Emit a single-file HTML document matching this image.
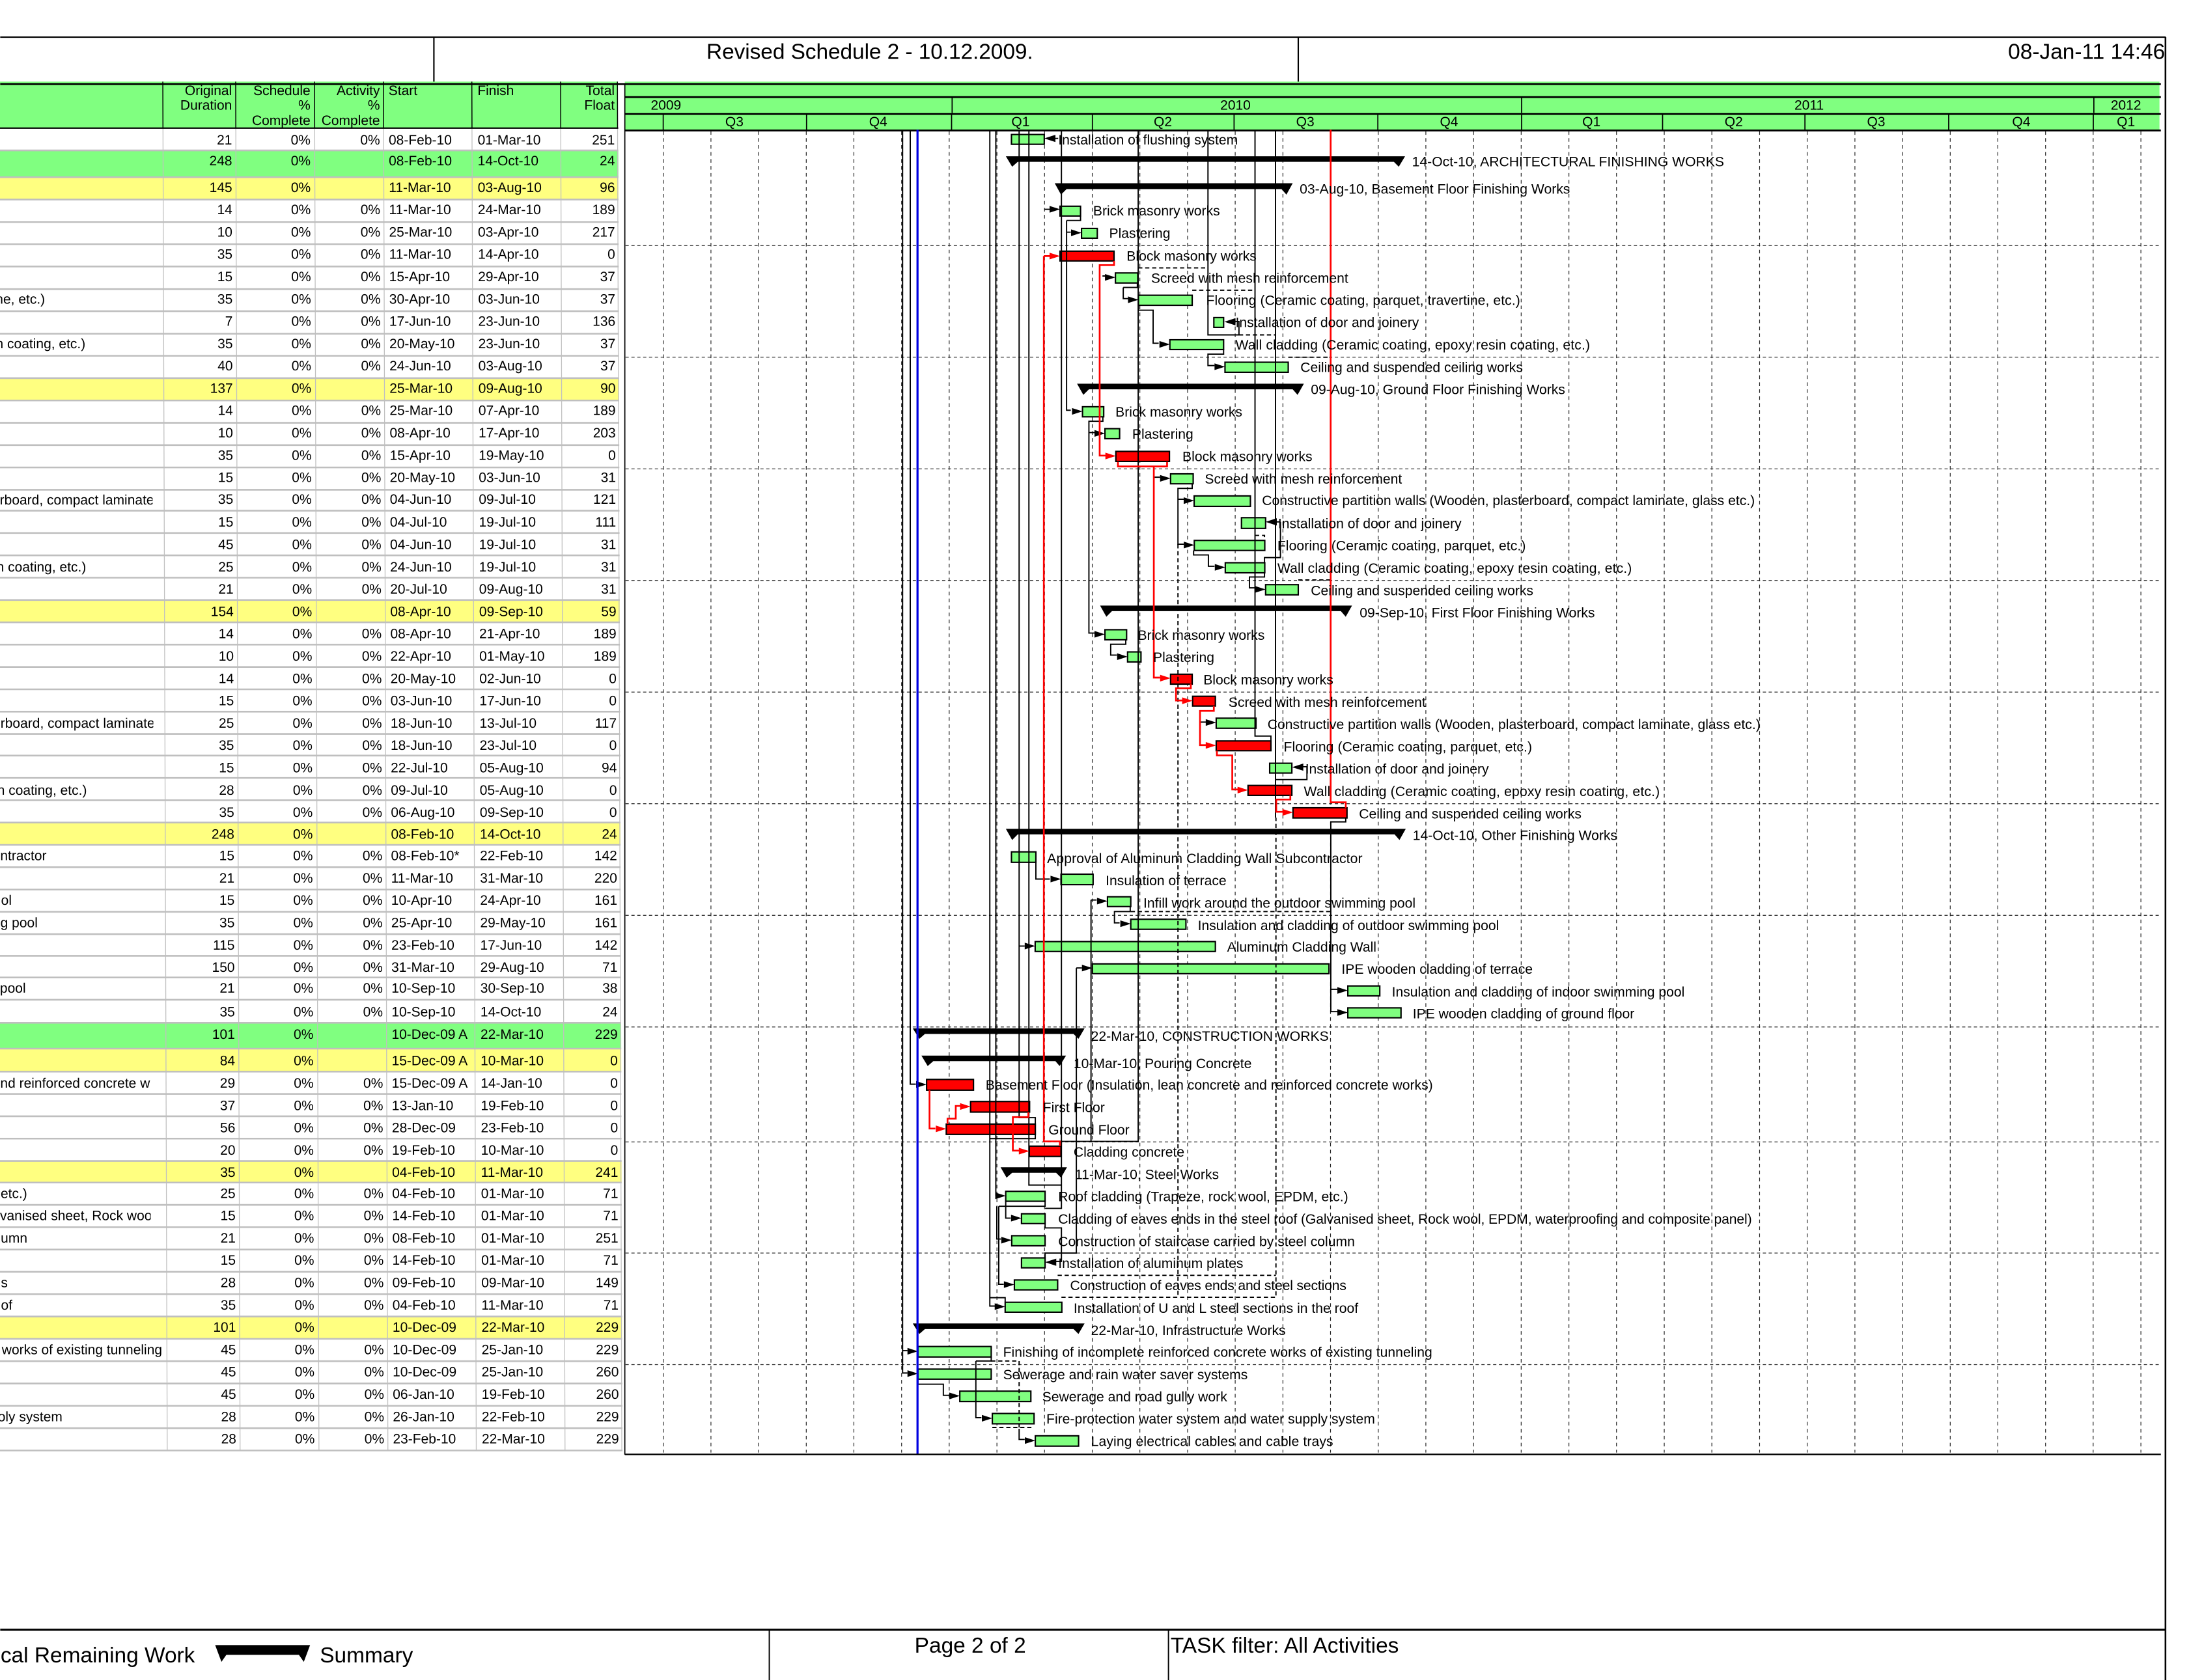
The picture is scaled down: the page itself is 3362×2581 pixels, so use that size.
<!DOCTYPE html>
<html><head><meta charset="utf-8"><title>Revised Schedule 2</title>
<style>
html,body{margin:0;padding:0;background:#fff;width:3362px;height:2581px;overflow:hidden}
svg{display:block}
text{font-family:"Liberation Sans",Arial,sans-serif;font-size:9.8px;fill:#000}
.l text{font-size:9.86px}
.e{text-anchor:end}.m{text-anchor:middle}
.b{font-size:15.6px}
.g{fill:#80ff80;stroke:#000;stroke-width:1}
.r{fill:#f00;stroke:#000;stroke-width:1}
.k{fill:none;stroke:#000;stroke-width:.9}
.d{fill:none;stroke:#000;stroke-width:.9;stroke-dasharray:3 2}
.q{fill:none;stroke:#f00;stroke-width:1.25}
</style></head><body>
<svg xmlns="http://www.w3.org/2000/svg" width="3362" height="2581" viewBox="0 0 1568 1204">
<defs><clipPath id="nc"><rect x="-5" y="90" width="113" height="960"/></clipPath><clipPath id="nd"><rect x="-5" y="90" width="110" height="960"/></clipPath></defs>
<rect width="1568" height="1204" fill="#fff"/>

<!-- page frame -->
<path d="M0 26.6H1551.5M310.7 26.6V60M930 26.6V60" fill="none" stroke="#000" stroke-width="1"/>
<path d="M1551.3 26.6V1204" fill="none" stroke="#000" stroke-width="1.2"/>
<path d="M0 1168H1551" fill="none" stroke="#000" stroke-width="1.5"/>
<path d="M551 1168V1204M837 1168V1204" fill="none" stroke="#000" stroke-width=".9"/>
<text class="b" x="506" y="42.3" textLength="234">Revised Schedule 2 - 10.12.2009.</text>
<text class="b e" x="1551" y="42.3">08-Jan-11 14:46</text>
<text class="b m" x="695" y="1184.3">Page 2 of 2</text>
<text class="b" x="838.5" y="1184.3">TASK filter: All Activities</text>
<text class="b e" x="139.5" y="1191.3">ical Remaining Work</text>
<text class="b" x="229" y="1191.3">Summary</text>
<path d="M154 1179H222L217.5 1191L214 1186H162L158.5 1191Z" fill="#000"/>

<!-- table -->
<g transform="skewX(.185)">
<rect x="-5" y="58.5" width="447" height="33.5" fill="#80ff80"/>
<rect x="-5" y="107.8" width="447.5" height="19.2" fill="#80ff80"/>
<rect x="-5" y="733" width="447.5" height="18.5" fill="#80ff80"/>
<g fill="#ffff80"><rect x="-5" y="127" width="447.5" height="16"/><rect x="-5" y="271" width="447.5" height="16"/><rect x="-5" y="430" width="447.5" height="16"/><rect x="-5" y="589.5" width="447.5" height="16"/><rect x="-5" y="751.5" width="447.5" height="16.5"/><rect x="-5" y="832" width="447.5" height="15.5"/><rect x="-5" y="943.5" width="447.5" height="16"/></g>
<path fill="none" stroke="#c0c0c0" stroke-width=".6" d="M116.3 92V1040M168.5 92V1040M225 92V1040M274.4 92V1040M337.7 92V1040M401.3 92V1040M442 92V1040"/>
<path fill="none" stroke="#bfbfbf" stroke-width="1.2" d="M-5 107.8H442.5M-5 127H442.5M-5 143H442.5M-5 159.2H442.5M-5 175H442.5M-5 191H442.5M-5 207.2H442.5M-5 223H442.5M-5 239.2H442.5M-5 255H442.5M-5 271H442.5M-5 287H442.5M-5 303H442.5M-5 319H442.5M-5 335H442.5M-5 351H442.5M-5 366H442.5M-5 382H442.5M-5 398H442.5M-5 414H442.5M-5 430H442.5M-5 446H442.5M-5 462H442.5M-5 478H442.5M-5 494H442.5M-5 510H442.5M-5 526H442.5M-5 541.5H442.5M-5 557.5H442.5M-5 573.5H442.5M-5 589.5H442.5M-5 605.5H442.5M-5 621.5H442.5M-5 637.5H442.5M-5 653.5H442.5M-5 669.5H442.5M-5 685H442.5M-5 700.5H442.5M-5 716.5H442.5M-5 733H442.5M-5 751.5H442.5M-5 768H442.5M-5 784H442.5M-5 800H442.5M-5 816H442.5M-5 832H442.5M-5 847.5H442.5M-5 863.5H442.5M-5 879.5H442.5M-5 895.5H442.5M-5 911.5H442.5M-5 927.5H442.5M-5 943.5H442.5M-5 959.5H442.5M-5 975.5H442.5M-5 991.5H442.5M-5 1007.5H442.5M-5 1023.5H442.5M-5 1039.5H442.5"/>
<path fill="none" stroke="#000" stroke-width=".7" d="M116.3 58.5V92M168.5 58.5V92M225 58.5V92M274.4 58.5V92M337.7 58.5V92M401.3 58.5V92M442 58.5V92"/>
<path fill="none" stroke="#000" stroke-width="1" d="M-5 91.8H442.5"/>
<g transform="translate(0,3.5)">
<text class=e x=165.8 y=64.5>Original</text><text class=e x=165.8 y=75>Duration</text>
<text class=e x=222 y=64.5>Schedule</text><text class=e x=222 y=75>%</text><text class=e x=222 y=86>Complete</text>
<text class=e x=271.8 y=64.5>Activity</text><text class=e x=271.8 y=75>%</text><text class=e x=271.8 y=86>Complete</text>
<text x=278 y=64.5>Start</text><text x=341.7 y=64.5>Finish</text>
<text class=e x=440 y=64.5>Total</text><text class=e x=440 y=75>Float</text>
<text x=-4 y=214>ne, etc.)</text><text x=-4 y=246>n coating, etc.)</text><text x=-1.5 y=358 clip-path="url(#nc)">rboard, compact laminate</text><text x=-4 y=406>n coating, etc.)</text><text x=-1.5 y=518 clip-path="url(#nc)">rboard, compact laminate</text><text x=-4 y=566>n coating, etc.)</text><text x=-2 y=613>ntractor</text><text x=-1.5 y=645>ol</text><text x=-2 y=661>g pool</text><text x=-2.5 y=708>pool</text><text x=-2.5 y=776 clip-path="url(#nd)">nd reinforced concrete works</text><text x=-2.5 y=855>etc.)</text><text x=-3 y=871 clip-path="url(#nd)">vanised sheet, Rock wool</text><text x=-2.5 y=887>umn</text><text x=-2.5 y=919>s</text><text x=-2.5 y=935>of</text><text x=-2 y=967>works of existing tunneling</text><text x=-5 y=1015>oly system</text>
<text class=e x=165.8 y=100>21</text><text class=e x=222 y=100>0%</text><text class=e x=271.8 y=100>0%</text><text x=278 y=100>08-Feb-10</text><text x=341.7 y=100>01-Mar-10</text><text class=e x=440 y=100>251</text>
<text class=e x=165.8 y=115>248</text><text class=e x=222 y=115>0%</text><text x=278 y=115>08-Feb-10</text><text x=341.7 y=115>14-Oct-10</text><text class=e x=440 y=115>24</text>
<text class=e x=165.8 y=134>145</text><text class=e x=222 y=134>0%</text><text x=278 y=134>11-Mar-10</text><text x=341.7 y=134>03-Aug-10</text><text class=e x=440 y=134>96</text>
<text class=e x=165.8 y=150>14</text><text class=e x=222 y=150>0%</text><text class=e x=271.8 y=150>0%</text><text x=278 y=150>11-Mar-10</text><text x=341.7 y=150>24-Mar-10</text><text class=e x=440 y=150>189</text>
<text class=e x=165.8 y=166>10</text><text class=e x=222 y=166>0%</text><text class=e x=271.8 y=166>0%</text><text x=278 y=166>25-Mar-10</text><text x=341.7 y=166>03-Apr-10</text><text class=e x=440 y=166>217</text>
<text class=e x=165.8 y=182>35</text><text class=e x=222 y=182>0%</text><text class=e x=271.8 y=182>0%</text><text x=278 y=182>11-Mar-10</text><text x=341.7 y=182>14-Apr-10</text><text class=e x=440 y=182>0</text>
<text class=e x=165.8 y=198>15</text><text class=e x=222 y=198>0%</text><text class=e x=271.8 y=198>0%</text><text x=278 y=198>15-Apr-10</text><text x=341.7 y=198>29-Apr-10</text><text class=e x=440 y=198>37</text>
<text class=e x=165.8 y=214>35</text><text class=e x=222 y=214>0%</text><text class=e x=271.8 y=214>0%</text><text x=278 y=214>30-Apr-10</text><text x=341.7 y=214>03-Jun-10</text><text class=e x=440 y=214>37</text>
<text class=e x=165.8 y=230>7</text><text class=e x=222 y=230>0%</text><text class=e x=271.8 y=230>0%</text><text x=278 y=230>17-Jun-10</text><text x=341.7 y=230>23-Jun-10</text><text class=e x=440 y=230>136</text>
<text class=e x=165.8 y=246>35</text><text class=e x=222 y=246>0%</text><text class=e x=271.8 y=246>0%</text><text x=278 y=246>20-May-10</text><text x=341.7 y=246>23-Jun-10</text><text class=e x=440 y=246>37</text>
<text class=e x=165.8 y=262>40</text><text class=e x=222 y=262>0%</text><text class=e x=271.8 y=262>0%</text><text x=278 y=262>24-Jun-10</text><text x=341.7 y=262>03-Aug-10</text><text class=e x=440 y=262>37</text>
<text class=e x=165.8 y=278>137</text><text class=e x=222 y=278>0%</text><text x=278 y=278>25-Mar-10</text><text x=341.7 y=278>09-Aug-10</text><text class=e x=440 y=278>90</text>
<text class=e x=165.8 y=294>14</text><text class=e x=222 y=294>0%</text><text class=e x=271.8 y=294>0%</text><text x=278 y=294>25-Mar-10</text><text x=341.7 y=294>07-Apr-10</text><text class=e x=440 y=294>189</text>
<text class=e x=165.8 y=310>10</text><text class=e x=222 y=310>0%</text><text class=e x=271.8 y=310>0%</text><text x=278 y=310>08-Apr-10</text><text x=341.7 y=310>17-Apr-10</text><text class=e x=440 y=310>203</text>
<text class=e x=165.8 y=326>35</text><text class=e x=222 y=326>0%</text><text class=e x=271.8 y=326>0%</text><text x=278 y=326>15-Apr-10</text><text x=341.7 y=326>19-May-10</text><text class=e x=440 y=326>0</text>
<text class=e x=165.8 y=342>15</text><text class=e x=222 y=342>0%</text><text class=e x=271.8 y=342>0%</text><text x=278 y=342>20-May-10</text><text x=341.7 y=342>03-Jun-10</text><text class=e x=440 y=342>31</text>
<text class=e x=165.8 y=357.6>35</text><text class=e x=222 y=357.6>0%</text><text class=e x=271.8 y=357.6>0%</text><text x=278 y=357.6>04-Jun-10</text><text x=341.7 y=357.6>09-Jul-10</text><text class=e x=440 y=357.6>121</text>
<text class=e x=165.8 y=374>15</text><text class=e x=222 y=374>0%</text><text class=e x=271.8 y=374>0%</text><text x=278 y=374>04-Jul-10</text><text x=341.7 y=374>19-Jul-10</text><text class=e x=440 y=374>111</text>
<text class=e x=165.8 y=390>45</text><text class=e x=222 y=390>0%</text><text class=e x=271.8 y=390>0%</text><text x=278 y=390>04-Jun-10</text><text x=341.7 y=390>19-Jul-10</text><text class=e x=440 y=390>31</text>
<text class=e x=165.8 y=406>25</text><text class=e x=222 y=406>0%</text><text class=e x=271.8 y=406>0%</text><text x=278 y=406>24-Jun-10</text><text x=341.7 y=406>19-Jul-10</text><text class=e x=440 y=406>31</text>
<text class=e x=165.8 y=422>21</text><text class=e x=222 y=422>0%</text><text class=e x=271.8 y=422>0%</text><text x=278 y=422>20-Jul-10</text><text x=341.7 y=422>09-Aug-10</text><text class=e x=440 y=422>31</text>
<text class=e x=165.8 y=438>154</text><text class=e x=222 y=438>0%</text><text x=278 y=438>08-Apr-10</text><text x=341.7 y=438>09-Sep-10</text><text class=e x=440 y=438>59</text>
<text class=e x=165.8 y=454>14</text><text class=e x=222 y=454>0%</text><text class=e x=271.8 y=454>0%</text><text x=278 y=454>08-Apr-10</text><text x=341.7 y=454>21-Apr-10</text><text class=e x=440 y=454>189</text>
<text class=e x=165.8 y=470>10</text><text class=e x=222 y=470>0%</text><text class=e x=271.8 y=470>0%</text><text x=278 y=470>22-Apr-10</text><text x=341.7 y=470>01-May-10</text><text class=e x=440 y=470>189</text>
<text class=e x=165.8 y=486>14</text><text class=e x=222 y=486>0%</text><text class=e x=271.8 y=486>0%</text><text x=278 y=486>20-May-10</text><text x=341.7 y=486>02-Jun-10</text><text class=e x=440 y=486>0</text>
<text class=e x=165.8 y=502>15</text><text class=e x=222 y=502>0%</text><text class=e x=271.8 y=502>0%</text><text x=278 y=502>03-Jun-10</text><text x=341.7 y=502>17-Jun-10</text><text class=e x=440 y=502>0</text>
<text class=e x=165.8 y=518>25</text><text class=e x=222 y=518>0%</text><text class=e x=271.8 y=518>0%</text><text x=278 y=518>18-Jun-10</text><text x=341.7 y=518>13-Jul-10</text><text class=e x=440 y=518>117</text>
<text class=e x=165.8 y=534>35</text><text class=e x=222 y=534>0%</text><text class=e x=271.8 y=534>0%</text><text x=278 y=534>18-Jun-10</text><text x=341.7 y=534>23-Jul-10</text><text class=e x=440 y=534>0</text>
<text class=e x=165.8 y=550>15</text><text class=e x=222 y=550>0%</text><text class=e x=271.8 y=550>0%</text><text x=278 y=550>22-Jul-10</text><text x=341.7 y=550>05-Aug-10</text><text class=e x=440 y=550>94</text>
<text class=e x=165.8 y=566>28</text><text class=e x=222 y=566>0%</text><text class=e x=271.8 y=566>0%</text><text x=278 y=566>09-Jul-10</text><text x=341.7 y=566>05-Aug-10</text><text class=e x=440 y=566>0</text>
<text class=e x=165.8 y=582>35</text><text class=e x=222 y=582>0%</text><text class=e x=271.8 y=582>0%</text><text x=278 y=582>06-Aug-10</text><text x=341.7 y=582>09-Sep-10</text><text class=e x=440 y=582>0</text>
<text class=e x=165.8 y=597.6>248</text><text class=e x=222 y=597.6>0%</text><text x=278 y=597.6>08-Feb-10</text><text x=341.7 y=597.6>14-Oct-10</text><text class=e x=440 y=597.6>24</text>
<text class=e x=165.8 y=613>15</text><text class=e x=222 y=613>0%</text><text class=e x=271.8 y=613>0%</text><text x=278 y=613>08-Feb-10*</text><text x=341.7 y=613>22-Feb-10</text><text class=e x=440 y=613>142</text>
<text class=e x=165.8 y=629>21</text><text class=e x=222 y=629>0%</text><text class=e x=271.8 y=629>0%</text><text x=278 y=629>11-Mar-10</text><text x=341.7 y=629>31-Mar-10</text><text class=e x=440 y=629>220</text>
<text class=e x=165.8 y=645>15</text><text class=e x=222 y=645>0%</text><text class=e x=271.8 y=645>0%</text><text x=278 y=645>10-Apr-10</text><text x=341.7 y=645>24-Apr-10</text><text class=e x=440 y=645>161</text>
<text class=e x=165.8 y=661>35</text><text class=e x=222 y=661>0%</text><text class=e x=271.8 y=661>0%</text><text x=278 y=661>25-Apr-10</text><text x=341.7 y=661>29-May-10</text><text class=e x=440 y=661>161</text>
<text class=e x=165.8 y=677>115</text><text class=e x=222 y=677>0%</text><text class=e x=271.8 y=677>0%</text><text x=278 y=677>23-Feb-10</text><text x=341.7 y=677>17-Jun-10</text><text class=e x=440 y=677>142</text>
<text class=e x=165.8 y=693>150</text><text class=e x=222 y=693>0%</text><text class=e x=271.8 y=693>0%</text><text x=278 y=693>31-Mar-10</text><text x=341.7 y=693>29-Aug-10</text><text class=e x=440 y=693>71</text>
<text class=e x=165.8 y=708>21</text><text class=e x=222 y=708>0%</text><text class=e x=271.8 y=708>0%</text><text x=278 y=708>10-Sep-10</text><text x=341.7 y=708>30-Sep-10</text><text class=e x=440 y=708>38</text>
<text class=e x=165.8 y=725>35</text><text class=e x=222 y=725>0%</text><text class=e x=271.8 y=725>0%</text><text x=278 y=725>10-Sep-10</text><text x=341.7 y=725>14-Oct-10</text><text class=e x=440 y=725>24</text>
<text class=e x=165.8 y=741>101</text><text class=e x=222 y=741>0%</text><text x=278 y=741>10-Dec-09 A</text><text x=341.7 y=741>22-Mar-10</text><text class=e x=440 y=741>229</text>
<text class=e x=165.8 y=760>84</text><text class=e x=222 y=760>0%</text><text x=278 y=760>15-Dec-09 A</text><text x=341.7 y=760>10-Mar-10</text><text class=e x=440 y=760>0</text>
<text class=e x=165.8 y=776>29</text><text class=e x=222 y=776>0%</text><text class=e x=271.8 y=776>0%</text><text x=278 y=776>15-Dec-09 A</text><text x=341.7 y=776>14-Jan-10</text><text class=e x=440 y=776>0</text>
<text class=e x=165.8 y=792>37</text><text class=e x=222 y=792>0%</text><text class=e x=271.8 y=792>0%</text><text x=278 y=792>13-Jan-10</text><text x=341.7 y=792>19-Feb-10</text><text class=e x=440 y=792>0</text>
<text class=e x=165.8 y=808>56</text><text class=e x=222 y=808>0%</text><text class=e x=271.8 y=808>0%</text><text x=278 y=808>28-Dec-09</text><text x=341.7 y=808>23-Feb-10</text><text class=e x=440 y=808>0</text>
<text class=e x=165.8 y=824>20</text><text class=e x=222 y=824>0%</text><text class=e x=271.8 y=824>0%</text><text x=278 y=824>19-Feb-10</text><text x=341.7 y=824>10-Mar-10</text><text class=e x=440 y=824>0</text>
<text class=e x=165.8 y=840>35</text><text class=e x=222 y=840>0%</text><text x=278 y=840>04-Feb-10</text><text x=341.7 y=840>11-Mar-10</text><text class=e x=440 y=840>241</text>
<text class=e x=165.8 y=855>25</text><text class=e x=222 y=855>0%</text><text class=e x=271.8 y=855>0%</text><text x=278 y=855>04-Feb-10</text><text x=341.7 y=855>01-Mar-10</text><text class=e x=440 y=855>71</text>
<text class=e x=165.8 y=871>15</text><text class=e x=222 y=871>0%</text><text class=e x=271.8 y=871>0%</text><text x=278 y=871>14-Feb-10</text><text x=341.7 y=871>01-Mar-10</text><text class=e x=440 y=871>71</text>
<text class=e x=165.8 y=887>21</text><text class=e x=222 y=887>0%</text><text class=e x=271.8 y=887>0%</text><text x=278 y=887>08-Feb-10</text><text x=341.7 y=887>01-Mar-10</text><text class=e x=440 y=887>251</text>
<text class=e x=165.8 y=903>15</text><text class=e x=222 y=903>0%</text><text class=e x=271.8 y=903>0%</text><text x=278 y=903>14-Feb-10</text><text x=341.7 y=903>01-Mar-10</text><text class=e x=440 y=903>71</text>
<text class=e x=165.8 y=919>28</text><text class=e x=222 y=919>0%</text><text class=e x=271.8 y=919>0%</text><text x=278 y=919>09-Feb-10</text><text x=341.7 y=919>09-Mar-10</text><text class=e x=440 y=919>149</text>
<text class=e x=165.8 y=935>35</text><text class=e x=222 y=935>0%</text><text class=e x=271.8 y=935>0%</text><text x=278 y=935>04-Feb-10</text><text x=341.7 y=935>11-Mar-10</text><text class=e x=440 y=935>71</text>
<text class=e x=165.8 y=951>101</text><text class=e x=222 y=951>0%</text><text x=278 y=951>10-Dec-09</text><text x=341.7 y=951>22-Mar-10</text><text class=e x=440 y=951>229</text>
<text class=e x=165.8 y=967>45</text><text class=e x=222 y=967>0%</text><text class=e x=271.8 y=967>0%</text><text x=278 y=967>10-Dec-09</text><text x=341.7 y=967>25-Jan-10</text><text class=e x=440 y=967>229</text>
<text class=e x=165.8 y=983>45</text><text class=e x=222 y=983>0%</text><text class=e x=271.8 y=983>0%</text><text x=278 y=983>10-Dec-09</text><text x=341.7 y=983>25-Jan-10</text><text class=e x=440 y=983>260</text>
<text class=e x=165.8 y=999>45</text><text class=e x=222 y=999>0%</text><text class=e x=271.8 y=999>0%</text><text x=278 y=999>06-Jan-10</text><text x=341.7 y=999>19-Feb-10</text><text class=e x=440 y=999>260</text>
<text class=e x=165.8 y=1015>28</text><text class=e x=222 y=1015>0%</text><text class=e x=271.8 y=1015>0%</text><text x=278 y=1015>26-Jan-10</text><text x=341.7 y=1015>22-Feb-10</text><text class=e x=440 y=1015>229</text>
<text class=e x=165.8 y=1031>28</text><text class=e x=222 y=1031>0%</text><text class=e x=271.8 y=1031>0%</text><text x=278 y=1031>23-Feb-10</text><text x=341.7 y=1031>22-Mar-10</text><text class=e x=440 y=1031>229</text>
</g></g>

<!-- chart header -->
<rect x="447.5" y="58.5" width="1099.5" height="35" fill="#80ff80"/>
<path fill="none" stroke="#000" stroke-width="1.3" d="M0 60.3H1548M447.5 69.6H1548M447.5 81.7H1548M447.5 93.5H1548"/>
<path fill="none" stroke="#000" stroke-width=".8" d="M447.5 60V1042.5M682 70V81M1090 70V81M1500 70V81M475 82V93M577.7 82V93M681.6 82V93M782.5 82V93M884 82V93M987 82V93M1090 82V93M1191 82V93M1293 82V93M1396 82V93M1499.6 82V93"/>
<g transform="translate(0,3.5)">
<text class=m x=477 y=75>2009</text><text class=m x=885 y=75>2010</text><text class=m x=1296 y=75>2011</text><text class=m x=1523 y=75>2012</text>
<text class=m x=526 y=87>Q3</text><text class=m x=629 y=87>Q4</text><text class=m x=731 y=87>Q1</text><text class=m x=833 y=87>Q2</text><text class=m x=935 y=87>Q3</text><text class=m x=1038 y=87>Q4</text><text class=m x=1140 y=87>Q1</text><text class=m x=1242 y=87>Q2</text><text class=m x=1344 y=87>Q3</text><text class=m x=1448 y=87>Q4</text><text class=m x=1523 y=87>Q1</text>
</g>

<!-- grid -->
<path fill="none" stroke="#222" stroke-width=".55" stroke-dasharray="2.6 2.4" d="M475 94V1041M509.2 94V1041M543.3 94V1041M577.5 94V1041M611.6 94V1041M645.8 94V1041M679.9 94V1041M714.1 94V1041M748.2 94V1041M782.4 94V1041M816.5 94V1041M850.7 94V1041M884.8 94V1041M919 94V1041M953.1 94V1041M987.3 94V1041M1021.4 94V1041M1055.6 94V1041M1089.7 94V1041M1123.9 94V1041M1158 94V1041M1192.2 94V1041M1226.3 94V1041M1260.5 94V1041M1294.6 94V1041M1328.8 94V1041M1362.9 94V1041M1397.1 94V1041M1431.2 94V1041M1465.4 94V1041M1499.5 94V1041M1533.7 94V1041"/>
<path fill="none" stroke="#222" stroke-width=".55" stroke-dasharray="2.3 1.9" d="M448 176H1548M448 256H1548M448 336H1548M448 416H1548M448 496H1548M448 576H1548M448 656H1548M448 736H1548M448 818.4H1548M448 898H1548M448 978H1548"/>

<!-- bars -->
<rect class=g x=724.5 y=96.4 width=23.5 height=7 />
<rect class=g x=759.3 y=147.8 width=14.7 height=7 />
<rect class=g x=774.7 y=163.7 width=11.3 height=7 />
<rect class=r x=759.3 y=180 width=38.7 height=7 />
<rect class=g x=799 y=195.6 width=16 height=7.2 />
<rect class=g x=815.5 y=211.6 width=38.5 height=7.2 />
<rect class=g x=869.5 y=227.6 width=7 height=7 />
<rect class=g x=838 y=243.5 width=38.5 height=7 />
<rect class=g x=877.5 y=259.6 width=45.3 height=7.2 />
<rect class=g x=775.4 y=291.5 width=15.2 height=7.2 />
<rect class=g x=791.5 y=307.2 width=10.5 height=7.2 />
<rect class=r x=799.3 y=323.5 width=38.4 height=7.2 />
<rect class=g x=838.5 y=339.6 width=16.2 height=7.1 />
<rect class=g x=855.4 y=355.4 width=40.3 height=7.5 />
<rect class=g x=889.3 y=371 width=17.3 height=7.7 />
<rect class=g x=855.5 y=387.3 width=50.5 height=7.2 />
<rect class=g x=877.7 y=403.3 width=28.3 height=7.2 />
<rect class=g x=906.6 y=419 width=23.4 height=7.3 />
<rect class=g x=791.5 y=451.3 width=15.5 height=7.2 />
<rect class=g x=807.7 y=467.2 width=9.6 height=7.2 />
<rect class=r x=838.5 y=483.2 width=15.5 height=7.1 />
<rect class=r x=854.3 y=499 width=16.3 height=7 />
<rect class=g x=871.2 y=514.7 width=28.5 height=7.2 />
<rect class=r x=871.2 y=531 width=39.2 height=7 />
<rect class=g x=909.5 y=547 width=15.9 height=7 />
<rect class=r x=894 y=562.9 width=31.4 height=7.1 />
<rect class=r x=926.2 y=578.9 width=38.7 height=7.3 />
<rect class=g x=724.5 y=610.5 width=17.5 height=7.5 />
<rect class=g x=760 y=626.5 width=23 height=7.5 />
<rect class=g x=793.3 y=642.7 width=16.7 height=7 />
<rect class=g x=810 y=658.8 width=39.5 height=7.2 />
<rect class=g x=741.5 y=674.8 width=129.1 height=7.1 />
<rect class=g x=782.5 y=690.8 width=169.5 height=7 />
<rect class=g x=965.5 y=706.6 width=22.9 height=7.1 />
<rect class=g x=965.5 y=722.3 width=38.1 height=7.1 />
<rect class=r x=663.7 y=773.6 width=33.6 height=7.7 />
<rect class=r x=695.2 y=789.4 width=42.3 height=7.6 />
<rect class=r x=677.8 y=805.6 width=63.8 height=7.4 />
<rect class=r x=737.3 y=821.4 width=22.7 height=7.4 />
<rect class=g x=720.4 y=853.8 width=28.2 height=7.1 />
<rect class=g x=731.7 y=869.9 width=16.9 height=7 />
<rect class=g x=724.7 y=885.6 width=23.9 height=7.2 />
<rect class=g x=731.7 y=901.5 width=16.9 height=7.1 />
<rect class=g x=726.6 y=917.3 width=31 height=7.1 />
<rect class=g x=720 y=933.3 width=40.6 height=7.1 />
<rect class=g x=657.5 y=965 width=52.5 height=7.5 />
<rect class=g x=657.5 y=981.2 width=52.5 height=7.2 />
<rect class=g x=687.5 y=997 width=50.9 height=7.4 />
<rect class=g x=710.8 y=1013 width=29.9 height=7.4 />
<rect class=g x=741.6 y=1029 width=31 height=7.4 />

<!-- summary bars -->
<g fill="#000">
<path d="M720.5 112H1006.5L1002 119.5L998.5 116H729L725 119.5Z"/>
<path d="M755.5 131.3H926L921.5 139.5L918 135.5H764L760 139.5Z"/>
<path d="M771.5 275H934L929.5 283L926 279H780L776 283Z"/>
<path d="M788 434H968.5L964 442L960.5 438H796.5L792.5 442Z"/>
<path d="M720.5 594H1007L1002.5 602L999 598H729L725 602Z"/>
<path d="M653.8 737H776.9L772.5 744.5L769 741H662.5L658.5 744.5Z"/>
<path d="M660 756.5H763.6L759 764L756 760.5H668.5L664.5 764Z"/>
<path d="M716.7 836.5H764.3L760 844L756.5 840.5H725L721 844Z"/>
<path d="M653.8 948.5H776.9L772.5 956L769 952.5H662.5L658.5 956Z"/>
</g>

<!-- links -->
<path class=d d="M815.3 192H865.3M854 208H899M887.5 240H914M923 256H953.3M930 415.6H953.3M899 383.7H905.8V387M810 653.3H953M843.8 390V929.7M757.6 914H914M760.3 929.7H914V586M710 975.4H730V1023M710.8 1023H740.7"/>
<path class=k d="M646.5 93V984H650M646.5 968H650M652 93V777H656M709 93V936H714M709 930H720V933M713.3 93V856.5H716M715.4 864.5V920.4H719M714 864.5V888H717M715.4 864.5H748.6V861M720.4 861V873H724M730 93V801H741.6V816H709M737 93V849.3H760.3M760.3 93V866H748.6M748.6 877V880H760.3V904H755M771 693.7V898H748.6V901.5M771 693.7H775M781.5 645H785.5M781.5 645V818M759 818H815.3V93M899 93V527.5H910.4V531M865.3 93V240H887.5V230.4H883M913.7 93V586M764 158V294H767M764 158H774V155M764 166.4H767M748 150H752M804.6 206V214H808M804.6 206H814.7V203M815.5 219V222.3H826V246H830M876.5 250.5V253.8H865.3V262H870M790 299V301.9H780V453.7H784M780 310H784M854 347V350H843.8V390H848M843.8 357.8H848M917.2 374V399.6H905.8V403.3M917.2 374H912M855 394.5V397.7H865.6V405.8H870M905.8 410.5V413.5H895V421.3H899M806.4 458.5V461.7H795.6V469.5H800M826.5 342H831M859.6 517.5H864M936.2 549.5V558.7H914M936.2 549.5H932M964 586V589H953.3V725H958M953.3 709H958M809.6 650V653.3H798.3V661.4H802M742 618V630H752M730 678H734M657.5 988.5V992H675.7V1000H680M699 975.4V1016H703M710 972.5V975.4H699M730 1024V1031.6H734M789.7 197.8H792M758 99.2H753"/>
<path d="M748 99.2l8 -2.6v5.2zM759.3 150l-7.5 -2.4v4.8zM774.7 166.8l-7.5 -2.4v4.8zM799 198.8l-7.5 -2.4v4.8zM815.5 214.8l-7.5 -2.4v4.8zM877 230.6l8 -2.6v5.2zM838 246.8l-7.5 -2.4v4.8zM877.5 262.8l-7.5 -2.4v4.8zM775.4 294.8l-7.5 -2.4v4.8zM791.5 310.6l-7.5 -2.4v4.8zM838.5 342.8l-7.5 -2.4v4.8zM855.4 358.8l-7.5 -2.4v4.8zM906.6 374l8 -2.6v5.2zM855.5 390.6l-7.5 -2.4v4.8zM877.7 406.6l-7.5 -2.4v4.8zM906.6 422.4l-7.5 -2.4v4.8zM791.5 454.6l-7.5 -2.4v4.8zM807.7 470.6l-7.5 -2.4v4.8zM871.2 517.8l-7.5 -2.4v4.8zM925.6 549.8l8 -2.6v5.2zM760 630l-7.5 -2.4v4.8zM793.3 645.8l-7.5 -2.4v4.8zM810 662l-7.5 -2.4v4.8zM741.5 678l-7.5 -2.4v4.8zM782.5 693.8l-7.5 -2.4v4.8zM965.5 709.8l-7.5 -2.4v4.8zM965.5 725.6l-7.5 -2.4v4.8zM663.7 777.2l-7.5 -2.4v4.8zM720.4 857l-7.5 -2.4v4.8zM731.7 873l-7.5 -2.4v4.8zM724.7 888.8l-7.5 -2.4v4.8zM748.6 904.6l8 -2.6v5.2zM726.6 920.6l-7.5 -2.4v4.8zM720 936.4l-7.5 -2.4v4.8zM657.5 968.4l-7.5 -2.4v4.8zM657.5 984.4l-7.5 -2.4v4.8zM687.5 1000.4l-7.5 -2.4v4.8zM710.8 1016.4l-7.5 -2.4v4.8zM741.6 1032.4l-7.5 -2.4v4.8z" fill="#000"/>
<path class=q d="M747.7 183.5V818H759.2V821.4M747.7 183.5H752M798 187V190H787.7V326.5H792M800.8 331V334.3H836V331M826.5 334.3V485.6H831M853 490V493.3H842.4V502H847M869.5 506V509.5H859.6V534H864M871.7 538V541.4H882.7V565.8H887M924.3 570V573H914.2V581.8H919M953.2 93V575H964V579M665.8 781.3V808.8H670M678.7 805.6V801.7H684.6V792.6H688M736.6 797V800.6H725.5V824.6H730"/>
<path d="M759.3 183.5l-7.5 -2.4v4.8zM799.3 326.8l-7.5 -2.4v4.8zM838.5 486l-7.5 -2.4v4.8zM854.3 502.2l-7.5 -2.4v4.8zM871.2 534.2l-7.5 -2.4v4.8zM894 566.2l-7.5 -2.4v4.8zM926.2 582.2l-7.5 -2.4v4.8zM677.8 809l-7.5 -2.4v4.8zM695.2 793l-7.5 -2.4v4.8zM737.3 825l-7.5 -2.4v4.8z" fill="#f00"/>
<path d="M657.2 93V1042" fill="none" stroke="#0000e0" stroke-width="1.5"/>
<path d="M447.5 1042.3H1548" fill="none" stroke="#000" stroke-width="1"/>

<!-- labels -->
<g class="l" transform="translate(0,3.5)">
<text x=758 y=100>Installation of flushing system</text>
<text x=1011.5 y=115.7>14-Oct-10, ARCHITECTURAL FINISHING WORKS</text>
<text x=931 y=135.3>03-Aug-10, Basement Floor Finishing Works</text>
<text x=783 y=151>Brick masonry works</text>
<text x=794.5 y=167>Plastering</text>
<text x=807 y=183.3>Block masonry works</text>
<text x=824.5 y=199.3>Screed with mesh reinforcement</text>
<text x=864 y=215 textLength=225>Flooring (Ceramic coating, parquet, travertine, etc.)</text>
<text x=885 y=231>Installation of door and joinery</text>
<text x=885 y=247 textLength=254>Wall cladding (Ceramic coating, epoxy resin coating, etc.)</text>
<text x=931.5 y=263>Ceiling and suspended ceiling works</text>
<text x=939 y=279>09-Aug-10, Ground Floor Finishing Works</text>
<text x=799 y=295>Brick masonry works</text>
<text x=811 y=311>Plastering</text>
<text x=847 y=327>Block masonry works</text>
<text x=863 y=343>Screed with mesh reinforcement</text>
<text x=904 y=358.6>Constructive partition walls (Wooden, plasterboard, compact laminate, glass etc.)</text>
<text x=915.5 y=375>Installation of door and joinery</text>
<text x=915 y=390.8 textLength=178>Flooring (Ceramic coating, parquet, etc.)</text>
<text x=915 y=407 textLength=254>Wall cladding (Ceramic coating, epoxy resin coating, etc.)</text>
<text x=939 y=423>Ceiling and suspended ceiling works</text>
<text x=974 y=439>09-Sep-10, First Floor Finishing Works</text>
<text x=815 y=455>Brick masonry works</text>
<text x=826 y=471>Plastering</text>
<text x=862 y=487>Block masonry works</text>
<text x=880 y=503>Screed with mesh reinforcement</text>
<text x=908 y=519>Constructive partition walls (Wooden, plasterboard, compact laminate, glass etc.)</text>
<text x=919.5 y=535 textLength=178>Flooring (Ceramic coating, parquet, etc.)</text>
<text x=935 y=551>Installation of door and joinery</text>
<text x=934 y=567 textLength=255>Wall cladding (Ceramic coating, epoxy resin coating, etc.)</text>
<text x=973.5 y=583>Ceiling and suspended ceiling works</text>
<text x=1012 y=598.5>14-Oct-10, Other Finishing Works</text>
<text x=750 y=615 textLength=226>Approval of Aluminum Cladding Wall Subcontractor</text>
<text x=792 y=631>Insulation of terrace</text>
<text x=819 y=647>Infill work around the outdoor swimming pool</text>
<text x=858 y=663>Insulation and cladding of outdoor swimming pool</text>
<text x=879 y=678.6>Aluminum Cladding Wall</text>
<text x=961 y=694.4>IPE wooden cladding of terrace</text>
<text x=997 y=710.6>Insulation and cladding of indoor swimming pool</text>
<text x=1012 y=726.4>IPE wooden cladding of ground floor</text>
<text x=781.5 y=742.3>22-Mar-10, CONSTRUCTION WORKS</text>
<text x=769 y=762>10-Mar-10, Pouring Concrete</text>
<text x=706 y=777.5>Basement Floor (Insulation, lean concrete and reinforced concrete works)</text>
<text x=747 y=793.5>First Floor</text>
<text x=751 y=809.6>Ground Floor</text>
<text x=769 y=825.5>Cladding concrete</text>
<text x=770 y=841.5>11-Mar-10, Steel Works</text>
<text x=758 y=857.5>Roof cladding (Trapeze, rock wool, EPDM, etc.)</text>
<text x=758 y=873.5 textLength=497>Cladding of eaves ends in the steel roof (Galvanised sheet, Rock wool, EPDM, waterproofing and composite panel)</text>
<text x=758 y=889.5>Construction of staircase carried by steel column</text>
<text x=758 y=905.3>Installation of aluminum plates</text>
<text x=766.5 y=921 textLength=198>Construction of eaves ends and steel sections</text>
<text x=769 y=937.3>Installation of U and L steel sections in the roof</text>
<text x=781.5 y=953.2>22-Mar-10, Infrastructure Works</text>
<text x=718.5 y=969 textLength=307.5>Finishing of incomplete reinforced concrete works of existing tunneling</text>
<text x=718.5 y=985>Sewerage and rain water saver systems</text>
<text x=746.5 y=1000.8>Sewerage and road gully work</text>
<text x=749.5 y=1016.8>Fire-protection water system and water supply system</text>
<text x=781.5 y=1032.8 textLength=173.5>Laying electrical cables and cable trays</text>
</g>
</svg>
</body></html>
